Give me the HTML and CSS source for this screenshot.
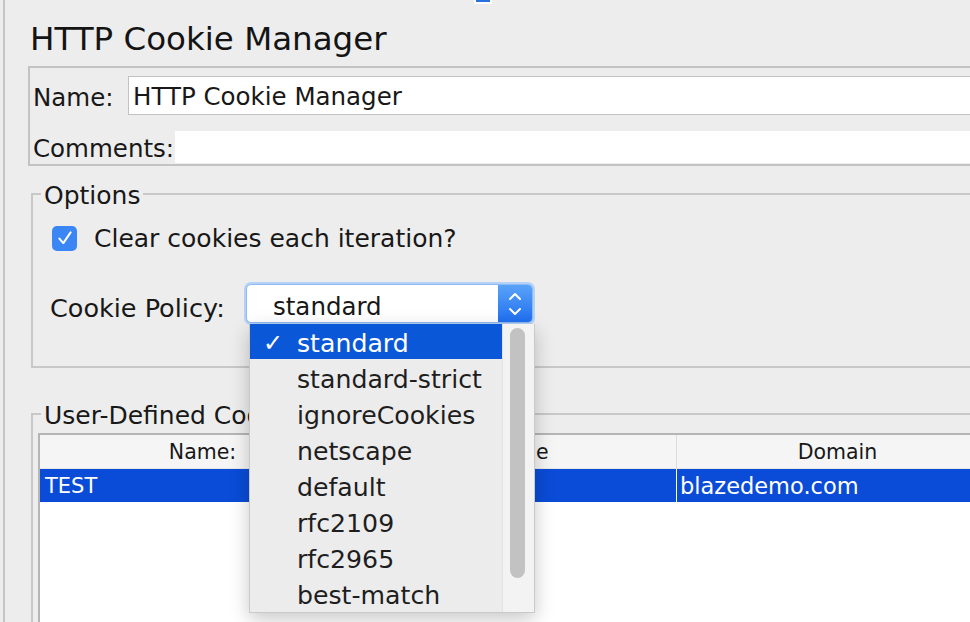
FILE: index.html
```html
<!DOCTYPE html>
<html lang="en">
<head>
  <meta charset="UTF-8">
  <title>HTTP Cookie Manager</title>
  <link rel="stylesheet" href="styles.css">
</head>
<body>
  <div class="page">
    <span class="focus-mark"></span>
    <h1 class="title">HTTP Cookie Manager</h1>

    <div class="name-panel">
      <div class="field-row">
        <span class="field-label name-label">Name:</span>
        <div class="text-field">HTTP Cookie Manager</div>
      </div>
      <div class="field-row comments-row">
        <span class="field-label">Comments:</span>
        <div class="text-field plain"></div>
      </div>
    </div>

    <fieldset class="group options">
      <legend>Options</legend>
      <div class="check-row">
        <span class="checkbox">
          <svg width="16" height="16" viewBox="0 0 16 16">
            <polyline points="3,8.5 6.5,12.5 13,3" fill="none" stroke="#fff" stroke-width="1.8" stroke-linecap="round" stroke-linejoin="round"/>
          </svg>
        </span>
        <span>Clear cookies each iteration?</span>
      </div>
      <div class="policy-row">
        <span class="policy-label">Cookie Policy:</span>
        <div class="combo">
          <span class="combo-value">standard</span>
          <span class="combo-btn">
            <svg width="16" height="28" viewBox="0 0 16 28">
              <polyline points="3,9 8,4 13,9" fill="none" stroke="#fff" stroke-width="2" stroke-linecap="round" stroke-linejoin="round"/>
              <polyline points="3,19 8,24 13,19" fill="none" stroke="#fff" stroke-width="2" stroke-linecap="round" stroke-linejoin="round"/>
            </svg>
          </span>
          <!-- open popup list -->
          <div class="popup">
            <div class="popup-list">
              <div class="popup-item active"><span class="tick">✓</span>standard</div>
              <div class="popup-item">standard-strict</div>
              <div class="popup-item">ignoreCookies</div>
              <div class="popup-item">netscape</div>
              <div class="popup-item">default</div>
              <div class="popup-item">rfc2109</div>
              <div class="popup-item">rfc2965</div>
              <div class="popup-item">best-match</div>
            </div>
            <div class="popup-scroll"><span class="thumb"></span></div>
          </div>
        </div>
      </div>
    </fieldset>

    <fieldset class="group cookies">
      <legend>User-Defined Cookies</legend>
      <div class="table">
        <div class="table-head">
          <div class="th">Name:</div>
          <div class="th">Value</div>
          <div class="th">Domain</div>
        </div>
        <div class="table-row selected">
          <div class="td">TEST</div>
          <div class="td"></div>
          <div class="td">blazedemo.com</div>
        </div>
        <div class="table-body"></div>
      </div>
    </fieldset>
  </div>
</body>
</html>
```

FILE: styles.css
```css
html, body {
  margin: 0; padding: 0;
  width: 970px; height: 622px;
  overflow: hidden;
  background: #ededed;
  font-family: "DejaVu Sans", "Liberation Sans", sans-serif;
  color: #181818;
}
.page {
  position: relative;
  margin-left: 3px;
  border-left: 2px solid #c6c6c6;
  width: 965px; height: 622px;
  overflow: hidden;
}
.focus-mark {
  position: absolute; left: 469px; top: 0;
  width: 14px; height: 2px;
  background: #2a70e0;
  border: 2px solid #fff; border-top: 0;
}
.title {
  margin: 0; padding: 20px 0 0 25px;
  font-size: 32.5px; font-weight: normal; line-height: 38px;
  height: 38px; margin-bottom: 8px;
  color: #141414;
}

/* Name / comments */
.name-panel {
  margin-left: 23px; margin-right: -20px;
  border: 2px solid #c3c3c3;
  padding: 8px 0 1px 3px;
}
.field-row { display: flex; align-items: center; font-size: 24.5px; }
.field-label { white-space: nowrap; padding-top: 3px; }
.name-label { width: 95px; }
.text-field {
  flex: 1; height: 37px; line-height: 39px;
  background: #fff; border: 1px solid #c2c2c2; border-right: 0;
  padding-left: 4px; font-size: 24.5px;
}
.comments-row { margin-top: 16px; }
.text-field.plain { height: 32px; border: 0; margin-left: 1px; }

/* Group boxes */
.group {
  margin: 12px -20px 0 26px;
  border: 2px solid #c8c8c8;
  padding: 0 0 0 5px;
  min-width: 0;
}
.group legend {
  font-size: 25px; line-height: 29px;
  margin-left: 3px; padding: 3px 3px 0;
}
.options { padding-bottom: 43px; }
.check-row {
  display: flex; align-items: center; gap: 17px;
  height: 30px; margin: 13px 0 0 14px;
  font-size: 25px;
}
.checkbox {
  width: 25px; height: 25px; border-radius: 5px;
  background: #3a86f4;
  display: flex; align-items: center; justify-content: center;
}
.checkbox svg { width: 18px; height: 18px; }
.policy-row {
  display: flex; align-items: center;
  margin: 31px 0 0 12px; font-size: 25.5px;
}
.policy-label { width: 196px; padding-top: 8px; }
.combo {
  position: relative;
  width: 285px; height: 37px;
  display: flex;
  border: 1px solid #8fb9f3; border-radius: 5px;
  box-shadow: 0 0 0 2px #b4d1f8;
  background: #fff;
}
.combo-value { flex: 1; padding: 3px 0 0 26px; line-height: 37px; font-size: 24.5px; }
.combo-btn {
  width: 34px;
  background: linear-gradient(180deg, #5aa3f9, #1f6ff0);
  border-radius: 0 4px 4px 0;
  display: flex; align-items: center; justify-content: center;
}

/* Popup list (lies over the page) */
.popup {
  position: absolute; left: 2px; top: 39px; z-index: 5;
  width: 284px; height: 288px;
  display: flex;
  background: #ececec;
  border: 1px solid #c9c9c9; border-top: 0;
  box-shadow: 0 6px 18px rgba(0,0,0,.22);
}
.popup-list { flex: 1; }
.popup-item {
  position: relative;
  height: 36px; line-height: 39px;
  padding-left: 47px;
  font-size: 25.2px; color: #1e1e1e;
}
.popup-item.active { background: #0a58d7; color: #fff; height: 35px; margin-bottom: 1px; }
.tick { position: absolute; left: 13px; top: 0; font-size: 24px; }
.popup-scroll {
  width: 31px;
  background: #f3f3f3; border-left: 1px solid #e2e2e2;
  padding-top: 4px;
}
.thumb {
  display: block; margin-left: 7px;
  width: 15px; height: 250px;
  border-radius: 8px; background: #c2c2c2;
}

/* Cookies table */
.cookies { margin-top: 30px; height: 300px; }
.table {
  margin-top: 3px;
  border: 2px solid #b5b5b5; border-right: 0;
  background: #fff; height: 260px;
}
.table-head, .table-row {
  display: grid;
  grid-template-columns: 325px 312px 322px;
}
.table-head { height: 33px; background: #f5f5f5; border-bottom: 1px solid #e6e6e6; }
.th {
  font-size: 20.5px; line-height: 35px; text-align: center;
  border-right: 1px solid #dcdcdc;
}
.th:first-child { border-right: 0; }
.table-row { height: 33px; }
.table-row.selected { background: #0a4cd7; color: #fff; }
.td { font-size: 22.5px; line-height: 34px; padding-left: 5px; }
.td:first-child { font-size: 21px; }
.td:nth-child(2) { border-right: 1px solid #fff; }
.td:nth-child(3) { padding-left: 3px; }
```
